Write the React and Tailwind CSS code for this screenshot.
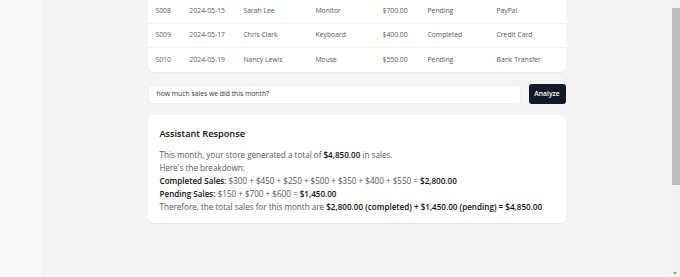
import React from "react";

const rows = [
  ["S008", "2024-05-15", "Sarah Lee", "Monitor", "$700.00", "Pending", "PayPal"],
  ["S009", "2024-05-17", "Chris Clark", "Keyboard", "$400.00", "Completed", "Credit Card"],
  ["S010", "2024-05-19", "Nancy Lewis", "Mouse", "$550.00", "Pending", "Bank Transfer"],
];

const widths = ["w-[34px]", "w-[54px]", "w-[72px]", "w-[67px]", "w-[45px]", "w-[69px]", "flex-1"];

export default function App() {
  return (
    <div
      className="flex h-[277px] w-[680px] overflow-hidden bg-[#f3f4f6]"
      style={{ fontFamily: '"Open Sans", "Noto Sans", sans-serif' }}
    >
      <div className="w-[42px] shrink-0 bg-[#f8f9fa]" />
      <div className="flex flex-1 justify-center">
        <div className="flex w-[418px] flex-col items-stretch">
          <div className="rounded-b-md bg-white shadow-[0_1px_2px_rgba(0,0,0,0.06)]">
            {rows.map((r, i) => (
              <div
                key={i}
                className={`flex h-[24px] items-center px-[8px] text-[6.8px] text-[#575757] ${
                  i < rows.length - 1 ? "border-b border-[#f0f1f3]" : ""
                }`}
              >
                {r.map((c, j) => (
                  <div key={j} className={`${widths[j]} shrink-0`}>
                    {c}
                  </div>
                ))}
              </div>
            ))}
          </div>
          <div className="mt-[12px] flex items-center gap-[8px]">
            <div className="flex h-[19px] flex-1 items-center rounded-[3px] border border-[#eceef1] bg-white px-[8px] text-[6.8px] text-[#333333]">
              how much sales we did this month?
            </div>
            <button className="flex h-[20px] w-[37px] items-center justify-center rounded-[3px] bg-[#111827] text-[6.8px] font-semibold text-white">
              Analyze
            </button>
          </div>
          <div className="mt-[11px] h-[108px] shrink-0 overflow-hidden rounded-md bg-white px-[12px] pt-[12px] shadow-[0_1px_2px_rgba(0,0,0,0.06)]">
            <div className="text-[9.2px] font-semibold leading-[14px] text-[#111111]">Assistant Response</div>
            <div className="mt-[7px] text-[8.1px] leading-[13px] text-[#555555]">
              <div className="h-[13px]">
                This month, your store generated a total of <span className="font-semibold text-[#111111]">$4,850.00</span> in sales.
              </div>
              <div className="h-[13px]">Here's the breakdown:</div>
              <div className="h-[13px]">
                <span className="font-semibold text-[#111111]">Completed Sales:</span> $300 + $450 + $250 + $500 + $350 + $400 + $550 ={" "}
                <span className="font-semibold text-[#111111]">$2,800.00</span>
              </div>
              <div className="h-[13px]">
                <span className="font-semibold text-[#111111]">Pending Sales:</span> $150 + $700 + $600 ={" "}
                <span className="font-semibold text-[#111111]">$1,450.00</span>
              </div>
              <div className="h-[13px] whitespace-nowrap">
                Therefore, the total sales for this month are{" "}
                <span className="font-semibold text-[#111111]">$2,800.00 (completed) + $1,450.00 (pending) = $4,850.00</span>
              </div>
            </div>
          </div>
        </div>
      </div>
      <div className="relative w-[9px] shrink-0 bg-[#f1f1f1]">
        <div className="mx-auto mt-[8px] h-[177px] w-[8px] bg-[#bdbdbd]" />
        <div className="absolute bottom-[2px] left-[2px] h-0 w-0 border-x-[2.5px] border-t-[3px] border-x-transparent border-t-[#a3a3a3]" />
      </div>
    </div>
  );
}
